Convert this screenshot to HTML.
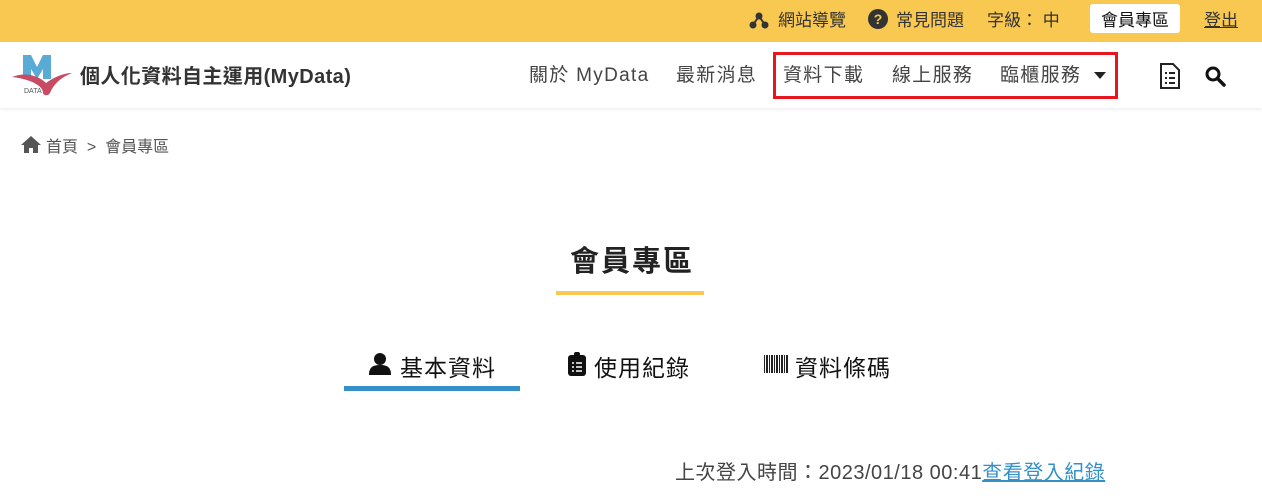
<!DOCTYPE html>
<html><head><meta charset="utf-8"><style>
*{margin:0;padding:0;box-sizing:border-box}
body{width:1262px;height:496px;background:#fff;font-family:"Liberation Sans","Noto Sans CJK TC",sans-serif;color:#333;position:relative;overflow:hidden}
.top{position:absolute;left:0;top:0;width:1262px;height:42px;background:#f9c850}
.a{position:absolute;font-size:17px;top:6px;color:#333;white-space:nowrap}
.nav{position:absolute;top:42px;left:0;width:1262px;height:66px;background:#fff;box-shadow:0 2px 3px rgba(0,0,0,.06)}
.n{position:absolute;top:60px;font-size:19px;color:#444;white-space:nowrap;letter-spacing:1.3px}
</style></head><body>
<div class="top"></div>
<svg style="position:absolute;left:749px;top:11px" width="20" height="18" viewBox="0 0 20 18"><circle cx="10" cy="5" r="3.5" fill="#333"/><circle cx="4" cy="14" r="3.5" fill="#333"/><circle cx="16" cy="14" r="3.5" fill="#333"/><path d="M10 5L4 14M10 5L16 14" stroke="#333" stroke-width="2"/></svg>
<div class="a" style="left:778px">網站導覽</div>
<svg style="position:absolute;left:868px;top:9px" width="20" height="20"><circle cx="10" cy="10" r="10" fill="#333"/><text x="10" y="15" font-size="14" font-weight="bold" text-anchor="middle" fill="#f9c850" font-family="Liberation Sans">?</text></svg>
<div class="a" style="left:896px">常見問題</div>
<div class="a" style="left:987px">字級： 中</div>
<div style="position:absolute;left:1090px;top:4px;width:90px;height:29px;background:#fff;border-radius:3px"></div>
<div class="a" style="left:1101px;color:#111">會員專區</div>
<div class="a" style="left:1204px;text-decoration:underline">登出</div>
<div class="nav"></div>
<svg style="position:absolute;left:10px;top:55px" width="64" height="42" viewBox="0 0 64 42"><path d="M13 0h8l6 12 6-12h8v24h-8v-10l-6 10-6-10v10h-8z" fill="#5aaad6"/><path d="M2 22c15-6 28 0 34 6 8-6 18-10 26-10-10 4-18 10-22 20-2 3-6 3-7 0 0-8-14-14-31-16z" fill="#c84a63"/><text x="14" y="38" font-size="7" fill="#555" font-family="Liberation Sans">DATA</text></svg>
<div style="position:absolute;left:80px;top:60px;font-size:20px;font-weight:bold;color:#333;letter-spacing:0.4px">個人化資料自主運用(MyData)</div>
<div class="n" style="left:529px">關於 MyData</div>
<div class="n" style="left:676px">最新消息</div>
<div style="position:absolute;left:773px;top:52px;width:345px;height:47px;border:3px solid #e8161e"></div>
<div class="n" style="left:783px">資料下載</div>
<div class="n" style="left:892px">線上服務</div>
<div class="n" style="left:1000px">臨櫃服務</div>
<div style="position:absolute;left:1094px;top:72px;border:6px solid transparent;border-top:7px solid #222;border-bottom:0"></div>
<svg style="position:absolute;left:1160px;top:63px" width="20" height="26" viewBox="0 0 20 26"><path d="M1 1h12l6 6v18H1z" fill="none" stroke="#222" stroke-width="2"/><path d="M5 10h2M5 15h2M5 20h2M9 10h6M9 15h6M9 20h6" stroke="#222" stroke-width="2"/></svg>
<svg style="position:absolute;left:1205px;top:66px" width="22" height="22"><circle cx="8" cy="8" r="6" fill="none" stroke="#111" stroke-width="3"/><path d="M12.5 12.5L19 19" stroke="#111" stroke-width="3.5" stroke-linecap="round"/></svg>
<svg style="position:absolute;left:21px;top:136px" width="20" height="17" viewBox="0 0 20 17"><path d="M10 0L0 9h3v8h5v-5h4v5h5V9h3z" fill="#555"/></svg>
<div style="position:absolute;left:46px;top:133px;font-size:16px;color:#555">首頁 &nbsp;&gt;&nbsp; 會員專區</div>
<div style="position:absolute;left:0;width:1262px;top:238px;text-align:center;font-size:29px;font-weight:bold;color:#222;letter-spacing:2px;padding-left:2px">會員專區</div>
<div style="position:absolute;left:556px;top:291px;width:148px;height:4px;background:#f9c850"></div>
<svg style="position:absolute;left:368px;top:353px" width="24" height="22"><circle cx="12" cy="6" r="6" fill="#111"/><path d="M1 22c0-8 4-10 11-10s11 2 11 10z" fill="#111"/></svg>
<div style="position:absolute;left:400px;top:349px;font-size:23px;color:#111;letter-spacing:1px">基本資料</div>
<div style="position:absolute;left:344px;top:386px;width:176px;height:5px;background:#3590c8"></div>
<svg style="position:absolute;left:568px;top:352px" width="18" height="24" viewBox="0 0 18 24"><rect x="0" y="3" width="18" height="21" rx="3" fill="#111"/><rect x="6" y="0" width="6" height="6" rx="2" fill="#111"/><path d="M4 11h2M4 15h2M4 19h2M8 11h6M8 15h6M8 19h6" stroke="#fff" stroke-width="1.6"/></svg>
<div style="position:absolute;left:594px;top:349px;font-size:23px;color:#111;letter-spacing:1px">使用紀錄</div>
<div style="position:absolute;left:764px;top:355px;width:24px;height:18px;background:repeating-linear-gradient(90deg,#222 0 1px,#fff 1px 2px,#222 2px 4px,#fff 4px 5px)"></div>
<div style="position:absolute;left:795px;top:349px;font-size:23px;color:#111;letter-spacing:1px">資料條碼</div>
<div style="position:absolute;left:675px;top:456px;font-size:20px;color:#444;white-space:nowrap;letter-spacing:0.5px">上次登入時間：2023/01/18 00:41<span style="color:#3590c8;text-decoration:underline">查看登入紀錄</span></div>
</body></html>
